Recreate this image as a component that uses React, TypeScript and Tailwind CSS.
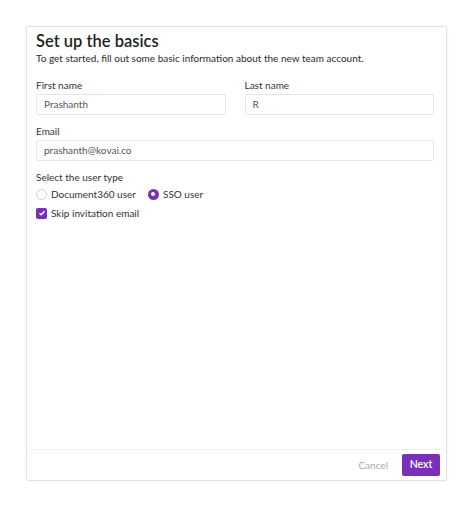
export default function App() {
  return (
    <div className="w-[474px] h-[508px] bg-white pt-[26px] pl-[26px]" style={{ fontFamily: 'Lato, "Noto Sans", sans-serif' }}>
      <div className="w-[421px] h-[455px] border border-[#e3e3e3] rounded-[2px] flex flex-col shadow-[0_0_3px_rgba(0,0,0,0.06)]">
        <div className="flex-1 pl-[9px] pr-[12px] pt-[4px]">
          <h1 className="text-[16.5px] font-semibold text-[#1f1f1f] leading-[20px]">Set up the basics</h1>
          <p className="text-[10px] text-[#2a2a2a] leading-[14px]">
            To get started, fill out some basic information about the new team account.
          </p>

          <div className="grid grid-cols-2 gap-[19px] mt-[14px]">
            <div>
              <label className="block text-[10px] text-[#333] leading-[13px]">First name</label>
              <div className="mt-[2px] h-[21px] border border-[#e6e6e6] rounded-[2px] px-[7px] flex items-center text-[10px] text-[#555]">
                Prashanth
              </div>
            </div>
            <div>
              <label className="block text-[10px] text-[#333] leading-[13px]">Last name</label>
              <div className="mt-[2px] h-[21px] border border-[#e6e6e6] rounded-[2px] px-[7px] flex items-center text-[10px] text-[#555]">
                R
              </div>
            </div>
          </div>

          <div className="mt-[10px]">
            <label className="block text-[10px] text-[#333] leading-[13px]">Email</label>
            <div className="mt-[2px] h-[21px] border border-[#e6e6e6] rounded-[2px] px-[7px] flex items-center text-[10px] text-[#555]">
              prashanth@kovai.co
            </div>
          </div>

          <div className="mt-[10px] text-[10px] text-[#333] leading-[13px]">Select the user type</div>
          <div className="flex items-center gap-[12px] mt-[2px] h-[16px]">
            <div className="flex items-center gap-[4px]">
              <span className="w-[11px] h-[11px] rounded-full border border-[#cfcfcf] bg-white" />
              <span className="text-[10px] text-[#333]">Document360 user</span>
            </div>
            <div className="flex items-center gap-[4px]">
              <span className="w-[11px] h-[11px] rounded-full bg-[#7a2fb8] flex items-center justify-center">
                <span className="w-[4px] h-[4px] rounded-full bg-white" />
              </span>
              <span className="text-[10px] text-[#333]">SSO user</span>
            </div>
          </div>
          <div className="flex items-center gap-[4px] mt-[3px] h-[16px]">
            <span className="w-[11px] h-[11px] rounded-[2px] bg-[#7a2fb8] flex items-center justify-center">
              <svg width="8" height="8" viewBox="0 0 8 8" fill="none">
                <path d="M1.5 4.2 L3.2 5.8 L6.5 2.3" stroke="white" strokeWidth="1.4" />
              </svg>
            </span>
            <span className="text-[10px] text-[#333]">Skip invitation email</span>
          </div>
        </div>

        <div className="h-[31px] border-t border-[#efefef] mx-[4px] flex items-center justify-end gap-[14px] pr-[2px]">
          <button className="text-[10px] text-[#aaa]">Cancel</button>
          <button className="w-[38px] h-[22px] bg-[#7a2fb8] text-white text-[10.5px] font-semibold rounded-[2px]">
            Next
          </button>
        </div>
      </div>
    </div>
  );
}
